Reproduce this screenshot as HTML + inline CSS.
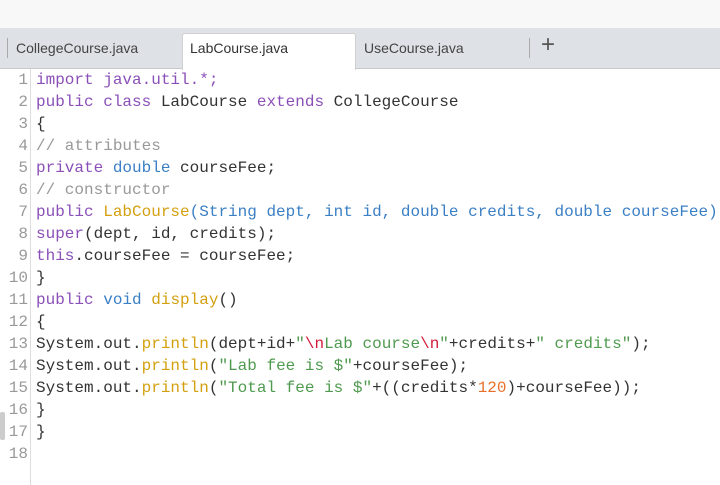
<!DOCTYPE html>
<html><head><style>
body{margin:0;width:720px;height:485px;background:#fff;overflow:hidden;font-family:"Liberation Sans",sans-serif;position:relative}
.top{position:absolute;left:0;top:0;width:720px;height:28px;background:#f8f8f8}
.bar{position:absolute;left:0;top:28px;width:720px;height:40px;background:#dee1e6;border-bottom:1px solid #c8c8c8}
.tab{position:absolute;top:12px;font-size:14px;color:#444}
.act{position:absolute;left:182px;top:5px;width:172px;height:36px;background:#fff;border:1px solid #d0d0d0;border-bottom:none;border-radius:3px 3px 0 0}
.sep{position:absolute;top:10px;width:1px;height:20px;background:#aaa}
.gut{position:absolute;left:0;top:69px;width:30px;height:416px;border-right:1px solid #ddd;background:#fff}
.code{position:absolute;left:0;top:69px;font-family:"Liberation Mono",monospace;font-size:16px;line-height:22px;white-space:pre;color:#333}
.ln{display:inline-block;width:28px;text-align:right;color:#999;margin-right:8px}
.k{color:#8a50b8}.t{color:#3b7fc4}.m{color:#d4a010}.s{color:#4f9a4f}.c{color:#999}.e{color:#d21a3a}.n{color:#e8702a}
</style></head><body>
<div class="top"></div>
<div class="bar">
<div class="sep" style="left:7px"></div>
<div class="tab" style="left:16px">CollegeCourse.java</div>
<div class="act"></div>
<div class="tab" style="left:190px;color:#333">LabCourse.java</div>
<div class="tab" style="left:364px">UseCourse.java</div>
<div class="sep" style="left:529px"></div>
<div class="tab" style="left:541px;top:3px;font-size:24px;color:#555">+</div>
</div>
<div class="gut"></div>
<div style="position:absolute;left:0;top:412px;width:5px;height:28px;background:#ccc;border-radius:2px"></div>
<div class="code"><span class="ln">1</span><span class="k">import java.util.*;</span>
<span class="ln">2</span><span class="k">public class</span> LabCourse <span class="k">extends</span> CollegeCourse
<span class="ln">3</span>{
<span class="ln">4</span><span class="c">// attributes</span>
<span class="ln">5</span><span class="k">private</span> <span class="t">double</span> courseFee;
<span class="ln">6</span><span class="c">// constructor</span>
<span class="ln">7</span><span class="k">public</span> <span class="m">LabCourse</span><span class="t">(String dept, int id, double credits, double courseFee)</span>
<span class="ln">8</span><span class="k">super</span>(dept, id, credits);
<span class="ln">9</span><span class="k">this</span>.courseFee = courseFee;
<span class="ln">10</span>}
<span class="ln">11</span><span class="k">public</span> <span class="t">void</span> <span class="m">display</span>()
<span class="ln">12</span>{
<span class="ln">13</span>System.out.<span class="m">println</span>(dept+id+<span class="s">"<span class="e">\n</span>Lab course<span class="e">\n</span>"</span>+credits+<span class="s">" credits"</span>);
<span class="ln">14</span>System.out.<span class="m">println</span>(<span class="s">"Lab fee is $"</span>+courseFee);
<span class="ln">15</span>System.out.<span class="m">println</span>(<span class="s">"Total fee is $"</span>+((credits*<span class="n">120</span>)+courseFee));
<span class="ln">16</span>}
<span class="ln">17</span>}
<span class="ln">18</span></div>
</body></html>
